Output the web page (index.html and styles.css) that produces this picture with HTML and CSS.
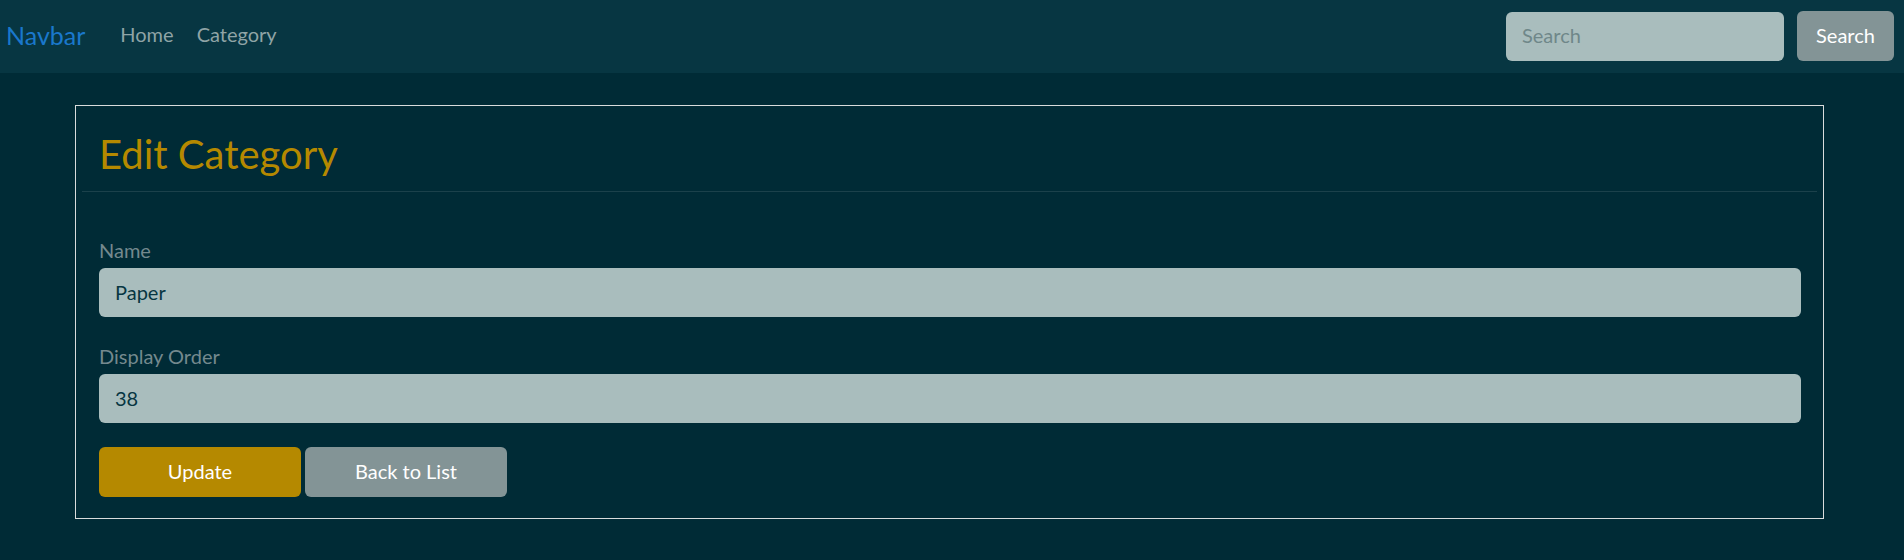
FILE: index.html
```html
<!DOCTYPE html>
<html lang="en">
<head>
<meta charset="utf-8">
<title>Edit Category</title>
<link rel="stylesheet" href="styles.css">
</head>
<body>
<nav class="navbar">
  <a class="brand" href="#">Navbar</a>
  <ul class="nav-links">
    <li><a href="#">Home</a></li>
    <li><a href="#">Category</a></li>
  </ul>
  <form class="search">
    <input class="search-input" type="text" placeholder="Search">
    <button class="btn btn-secondary search-btn" type="button">Search</button>
  </form>
</nav>
<main class="page">
  <section class="card">
    <header class="card-header">
      <h2 class="title">Edit Category</h2>
    </header>
    <form class="card-body">
      <label class="form-label">Name</label>
      <input class="form-control" type="text" value="Paper">
      <label class="form-label">Display Order</label>
      <input class="form-control" type="text" value="38">
      <div class="actions">
        <button class="btn btn-primary" type="button">Update</button>
        <a class="btn btn-secondary" href="#">Back to List</a>
      </div>
    </form>
  </section>
</main>
</body>
</html>
```
FILE: styles.css
```css
* { box-sizing: border-box; }
html, body { margin: 0; padding: 0; }
body {
  background: #002b36;
  font-family: Lato, "Noto Sans", sans-serif;
  font-size: 20px;
  color: #839496;
}
.navbar {
  height: 73px;
  background: #073642;
  display: flex;
  align-items: center;
  padding: 0 10px 1px 6px;
}
.brand {
  font-size: 25px;
  color: #1a78cc;
  text-decoration: none;
  margin-right: 23px;
  padding-bottom: 3px;
}
.nav-links {
  list-style: none;
  display: flex;
  margin: 0;
  padding: 0 0 4px;
  flex: 1;
}
.nav-links a {
  display: block;
  padding: 0 11px 0 12px;
  font-size: 20px;
  color: #8fa4a6;
  text-decoration: none;
}
.search {
  display: flex;
  align-items: center;
  gap: 13px;
}
.search-input {
  width: 278px;
  height: 49px;
  border: none;
  border-radius: 6px;
  background: #a9bdbd;
  padding: 0 16px 3px;
  font-family: inherit;
  font-size: 20px;
  color: #073642;
}
.search-input::placeholder { color: #6f8789; }
.btn {
  display: inline-flex;
  align-items: center;
  justify-content: center;
  height: 50px;
  border: none;
  border-radius: 6px;
  font-family: inherit;
  font-size: 20px;
  color: #fff;
  text-decoration: none;
  padding: 0 18px 3px;
}
.btn-primary { background: #b58900; }
.btn-secondary { background: #839496; }
.search-btn { width: 97px; }
.page { padding: 32px 80px 0 75px; }
.card {
  border: 1px solid #d8dcdc;
  padding: 0 6px;
}
.card-header {
  padding: 24px 17px 13px;
  border-bottom: 1px solid #1b414b;
}
.title {
  margin: 0;
  font-size: 40px;
  font-weight: 400;
  line-height: 48px;
  color: #b58900;
}
.card-body {
  display: flex;
  flex-direction: column;
  padding: 43px 16px 21px 17px;
}
.form-label {
  display: block;
  line-height: 30px;
  margin-bottom: 3px;
  color: #74898e;
}
.form-control {
  height: 49px;
  border: none;
  border-radius: 6px;
  background: #a9bdbd;
  padding: 0 16px 2px;
  font-family: inherit;
  font-size: 20px;
  color: #073642;
  margin-bottom: 24px;
}
.actions {
  display: flex;
  gap: 4px;
}
.actions .btn { width: 202px; }
```
